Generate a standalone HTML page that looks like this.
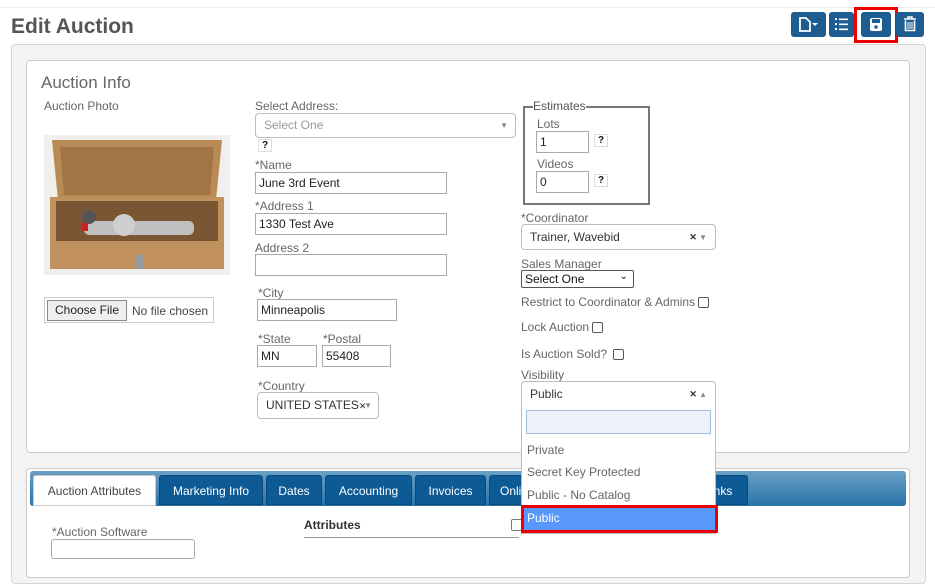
<!DOCTYPE html>
<html><head><style>
*{box-sizing:border-box;margin:0;padding:0}
body{width:935px;height:551px;overflow:hidden;background:#fff;font-family:"Liberation Sans",Arial,sans-serif;color:#555;position:relative;font-size:12px}
.a{position:absolute}
.lbl{position:absolute;font-size:12px;color:#666;white-space:nowrap}
.inp{position:absolute;border:1px solid #aaa;background:#fff;font-size:12px;color:#222;padding:3px 3px;height:22px;white-space:nowrap}
.sel{position:absolute;border:1px solid #bbb;border-radius:4px;background:#fff;font-size:12px;color:#444;padding:0 8px;white-space:nowrap}
.q{position:absolute;width:14px;height:13px;border:1px solid #ddd;background:#fff;font-size:10px;font-weight:bold;color:#111;text-align:center;line-height:11px}
.cb{display:inline-block;width:11px;height:11px;border:1px solid #555;border-radius:2px;vertical-align:-2px;margin-left:3px}
.btn{position:absolute;top:12px;height:25px;background:#1e5d92;border-radius:3px}
.tab{position:absolute;top:475px;height:30px;background:#0e5a95;color:#fff;font-size:12px;text-align:center;line-height:30px;border-radius:3px 3px 0 0;border:1px solid #0a4a7a}
.opt{position:absolute;left:527px;font-size:12px;color:#666}
</style></head><body>
<div class="a" style="left:0;top:0;width:935px;height:8px;border-bottom:1px solid #eee"></div>
<div class="a" style="left:11px;top:15px;font-size:21px;font-weight:bold;color:#555">Edit Auction</div>
<div class="btn" style="left:791px;width:35px"><svg width="35" height="25"><path d="M9 6h6l4 4v9H9z" fill="none" stroke="#fff" stroke-width="1.8"/><path d="M21 11h6l-3 3z" fill="#fff"/></svg></div>
<div class="btn" style="left:829px;width:25px"><svg width="25" height="25"><g fill="#fff"><rect x="6" y="6" width="2" height="2"/><rect x="6" y="11" width="2" height="2"/><rect x="6" y="16" width="2" height="2"/><rect x="10" y="6.5" width="9" height="1.6"/><rect x="10" y="11.5" width="9" height="1.6"/><rect x="10" y="16.5" width="9" height="1.6"/></g></svg></div>
<div class="btn" style="left:861px;width:30px"><svg width="30" height="25"><rect x="9" y="6" width="12" height="13" rx="2" fill="#fff"/><rect x="11" y="7" width="8" height="4" fill="#1e5d92"/><circle cx="15" cy="15" r="1.8" fill="#1e5d92"/></svg></div>
<div class="a" style="left:854px;top:7px;width:44px;height:36px;border:3px solid #e00"></div>
<div class="btn" style="left:896px;width:28px"><svg width="28" height="25"><path d="M8 7h12M12 7V5h4v2M9.5 8.5v10h9v-10" fill="none" stroke="#fff" stroke-width="1.6"/><path d="M12 10v7M14 10v7M16 10v7" stroke="#fff" stroke-width="1"/></svg></div>
<div class="a" style="left:11px;top:44px;width:915px;height:540px;background:#f3f3f3;border:1px solid #d5d5d5;border-radius:4px"></div>
<div class="a" style="left:26px;top:60px;width:884px;height:393px;background:#fff;border:1px solid #ccc;border-radius:4px"></div>
<div class="a" style="left:41px;top:73px;font-size:17px;color:#666">Auction Info</div>
<div class="lbl" style="left:44px;top:99px">Auction Photo</div>
<div class="a" style="left:44px;top:135px;width:186px;height:140px;background:#eee">
<svg width="186" height="140"><rect width="186" height="140" fill="#f1efec"/><path d="M8 5h170l-6 60H14z" fill="#b88a55"/><path d="M16 12h154l-4 48H20z" fill="#a37444"/><path d="M6 62h174v72H6z" fill="#c0915c"/><path d="M12 66h162v40H12z" fill="#7a5634"/><rect x="40" y="86" width="110" height="14" rx="5" fill="#bfbfbf"/><circle cx="80" cy="90" r="11" fill="#cfcfcf"/><circle cx="45" cy="82" r="7" fill="#555"/><rect x="38" y="88" width="6" height="8" fill="#c22"/><rect x="92" y="120" width="8" height="14" fill="#999"/></svg></div>
<div class="a" style="left:44px;top:297px;width:170px;height:26px;border:1px solid #ccc;background:#fff"></div>
<div class="a" style="left:47px;top:300px;width:80px;height:21px;border:1px solid #888;background:#efefef;font-size:12px;color:#222;text-align:center;line-height:19px">Choose File</div>
<div class="lbl" style="left:132px;top:304px;font-size:12px;color:#444">No file chosen</div>
<div class="lbl" style="left:255px;top:99px">Select Address:</div>
<div class="sel" style="left:255px;top:113px;width:261px;height:25px;line-height:23px;color:#999">Select One<span style="position:absolute;right:7px;font-size:8px;color:#888">▼</span></div>
<div class="q" style="left:258px;top:139px">?</div>
<div class="lbl" style="left:255px;top:158px">*Name</div>
<div class="inp" style="left:255px;top:172px;width:192px">June 3rd Event</div>
<div class="lbl" style="left:255px;top:199px">*Address 1</div>
<div class="inp" style="left:255px;top:213px;width:192px">1330 Test Ave</div>
<div class="lbl" style="left:255px;top:241px">Address 2</div>
<div class="inp" style="left:255px;top:254px;width:192px"></div>
<div class="lbl" style="left:258px;top:286px">*City</div>
<div class="inp" style="left:257px;top:299px;width:140px">Minneapolis</div>
<div class="lbl" style="left:258px;top:332px">*State</div>
<div class="inp" style="left:257px;top:345px;width:60px">MN</div>
<div class="lbl" style="left:323px;top:332px">*Postal</div>
<div class="inp" style="left:322px;top:345px;width:69px">55408</div>
<div class="lbl" style="left:258px;top:379px">*Country</div>
<div class="sel" style="left:257px;top:392px;width:122px;height:27px;line-height:25px;color:#333;padding-left:8px">UNITED STATES<span style="font-size:9px">✕</span><span style="position:absolute;right:6px;font-size:8px;color:#888">▼</span></div>
<div class="a" style="left:523px;top:106px;width:127px;height:99px;border:2px solid #777"></div>
<div class="lbl" style="left:533px;top:99px;background:#fff;color:#555">Estimates</div>
<div class="lbl" style="left:537px;top:117px">Lots</div>
<div class="inp" style="left:536px;top:131px;width:53px">1</div>
<div class="q" style="left:594px;top:134px">?</div>
<div class="lbl" style="left:537px;top:157px">Videos</div>
<div class="inp" style="left:536px;top:171px;width:53px">0</div>
<div class="q" style="left:594px;top:174px">?</div>
<div class="lbl" style="left:521px;top:211px">*Coordinator</div>
<div class="sel" style="left:521px;top:224px;width:195px;height:26px;line-height:24px;color:#333">Trainer, Wavebid<span style="position:absolute;right:8px;font-size:8px;color:#888"><b style="color:#333;font-size:9px">✕</b> ▼</span></div>
<div class="lbl" style="left:521px;top:257px">Sales Manager</div>
<div class="a" style="left:521px;top:270px;width:113px;height:18px;border:1px solid #555;border-radius:2px;font-size:12px;color:#111;padding:1px 3px">Select One<span style="position:absolute;right:5px;top:0;font-size:10px">⌄</span></div>
<div class="lbl" style="left:521px;top:295px">Restrict to Coordinator &amp; Admins<span class="cb"></span></div>
<div class="lbl" style="left:521px;top:320px">Lock Auction<span class="cb"></span></div>
<div class="lbl" style="left:521px;top:347px">Is Auction Sold? <span class="cb"></span></div>
<div class="lbl" style="left:521px;top:368px">Visibility</div>
<div class="a" style="left:26px;top:468px;width:884px;height:110px;background:#fff;border:1px solid #ccc;border-radius:4px"></div>
<div class="a" style="left:30px;top:471px;width:876px;height:35px;background:linear-gradient(#6aa0c6,#2a73a8);border-radius:3px"></div>
<div class="tab" style="left:33px;width:123px;background:#fff;color:#444;border-color:#ccc;height:31px">Auction Attributes</div>
<div class="tab" style="left:159px;width:104px">Marketing Info</div>
<div class="tab" style="left:266px;width:56px">Dates</div>
<div class="tab" style="left:325px;width:87px">Accounting</div>
<div class="tab" style="left:415px;width:71px">Invoices</div>
<div class="tab" style="left:489px;width:40px;text-align:left;padding-left:10px">Onli</div>
<div class="tab" style="left:700px;width:48px;text-align:left;padding-left:10px">inks</div>
<div class="lbl" style="left:52px;top:525px">*Auction Software</div>
<div class="a" style="left:51px;top:539px;width:144px;height:20px;border:1px solid #aaa;border-radius:3px"></div>
<div class="a" style="left:304px;top:518px;font-size:12px;font-weight:bold;color:#333">Attributes</div>
<div class="a" style="left:304px;top:537px;width:215px;border-top:1px solid #999"></div>
<div class="a" style="left:511px;top:519px;width:12px;height:12px;border:1px solid #777;border-radius:2px"></div>
<div class="sel" style="left:521px;top:381px;width:195px;height:27px;line-height:25px;color:#333;border-radius:4px 4px 0 0">Public<span style="position:absolute;right:8px;font-size:8px;color:#888"><b style="color:#333;font-size:9px">✕</b> ▲</span></div>
<div class="a" style="left:521px;top:407px;width:195px;height:127px;background:#fff;border:1px solid #bbb;border-top:none"></div>
<div class="a" style="left:526px;top:410px;width:185px;height:24px;background:#eef0fc;border:1px solid #9ec0e0"></div>
<div class="opt" style="top:443px">Private</div>
<div class="opt" style="top:465px">Secret Key Protected</div>
<div class="opt" style="top:488px">Public - No Catalog</div>
<div class="a" style="left:521px;top:505px;width:197px;height:28px;border:3px solid #e00;background:#5897fb"></div>
<div class="opt" style="top:511px;color:#fff">Public</div>
</body></html>
